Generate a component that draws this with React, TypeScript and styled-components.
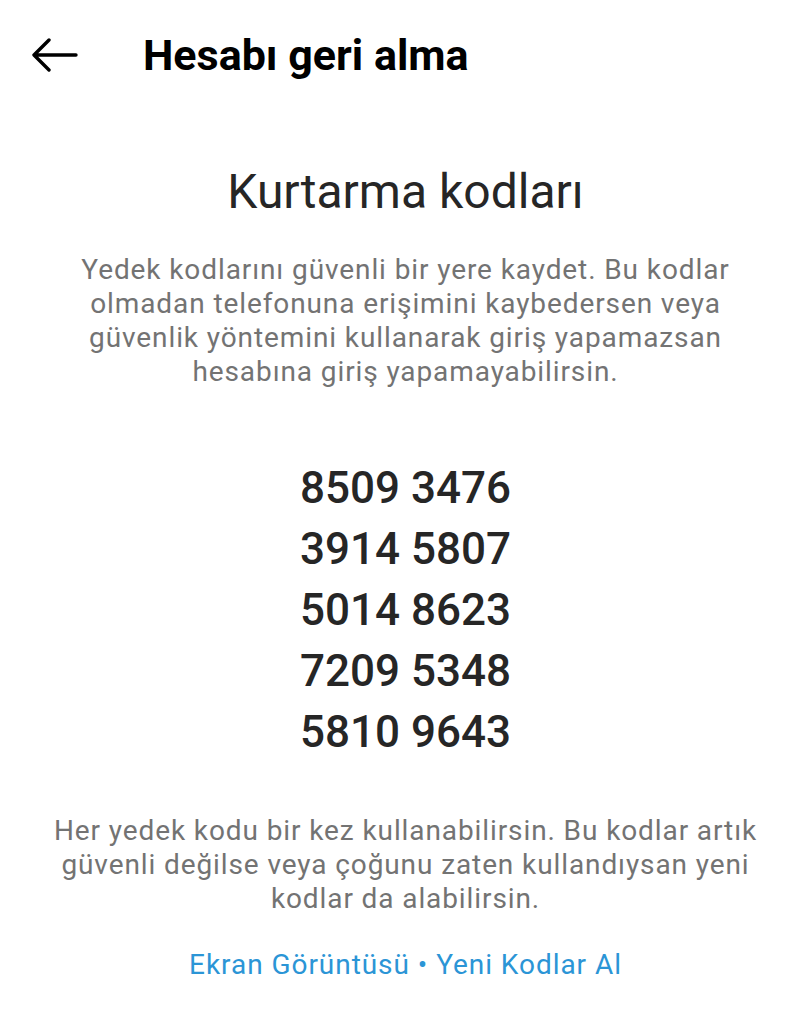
import React from 'react';
import styled, { createGlobalStyle } from 'styled-components';

const GlobalStyle = createGlobalStyle`
  html, body {
    margin: 0;
    padding: 0;
    background: #fff;
  }
  body {
    font-family: Roboto, "Noto Sans", Arial, sans-serif;
    -webkit-font-smoothing: antialiased;
  }
`;

const Page = styled.div`
  width: 811px;
  min-height: 1024px;
  background: #fff;
`;

const Header = styled.header`
  display: flex;
  align-items: center;
  height: 110px;
  padding-left: 29px;
  box-sizing: border-box;
`;

const BackButton = styled.button`
  display: flex;
  align-items: center;
  justify-content: center;
  width: 52px;
  height: 52px;
  padding: 0;
  margin-right: 62px;
  border: 0;
  background: none;
  color: #000;
  cursor: pointer;
`;

const HeaderTitle = styled.h1`
  margin: 0;
  color: #000;
  font-size: 43px;
  font-weight: 700;
`;

const Content = styled.main`
  display: flex;
  flex-direction: column;
  align-items: center;
  padding: 54px 45px 0;
  text-align: center;
`;

const Title = styled.h2`
  margin: 0 0 33px;
  color: #262626;
  font-size: 48px;
  font-weight: 400;
  line-height: 56px;
`;

const Description = styled.p`
  margin: 0;
  color: #737373;
  font-size: 28px;
  line-height: 34px;
  letter-spacing: 0.9px;
`;

const CodeList = styled.ul`
  list-style: none;
  margin: 69px 0 51px;
  padding: 0;
`;

const Code = styled.li`
  color: #262626;
  font-size: 44px;
  font-weight: 500;
  line-height: 61px;
`;

const Links = styled.div`
  margin-top: 32px;
  color: #2b95d6;
  font-size: 28px;
  line-height: 34px;
  letter-spacing: 0.95px;
`;

const Link = styled.a`
  color: inherit;
  text-decoration: none;
  cursor: pointer;
`;

const codes = ['8509 3476', '3914 5807', '5014 8623', '7209 5348', '5810 9643'];

function BackArrow() {
  return (
    <svg width="46" height="34" viewBox="0 0 46 34" fill="none">
      <path
        d="M44 17H3M17 2L2 17L17 32"
        stroke="currentColor"
        strokeWidth="3.4"
        strokeLinecap="round"
        strokeLinejoin="round"
      />
    </svg>
  );
}

function App() {
  return (
    <Page>
      <GlobalStyle />
      <Header>
        <BackButton aria-label="Geri">
          <BackArrow />
        </BackButton>
        <HeaderTitle>Hesabı geri alma</HeaderTitle>
      </Header>
      <Content>
        <Title>Kurtarma kodları</Title>
        <Description>
          Yedek kodlarını güvenli bir yere kaydet. Bu kodlar olmadan telefonuna erişimini
          kaybedersen veya güvenlik yöntemini kullanarak giriş yapamazsan hesabına giriş
          yapamayabilirsin.
        </Description>
        <CodeList>
          {codes.map(code => (
            <Code key={code}>{code}</Code>
          ))}
        </CodeList>
        <Description>
          Her yedek kodu bir kez kullanabilirsin. Bu kodlar artık güvenli değilse veya
          çoğunu zaten kullandıysan yeni kodlar da alabilirsin.
        </Description>
        <Links>
          <Link>Ekran Görüntüsü</Link> • <Link>Yeni Kodlar Al</Link>
        </Links>
      </Content>
    </Page>
  );
}

export default App;
